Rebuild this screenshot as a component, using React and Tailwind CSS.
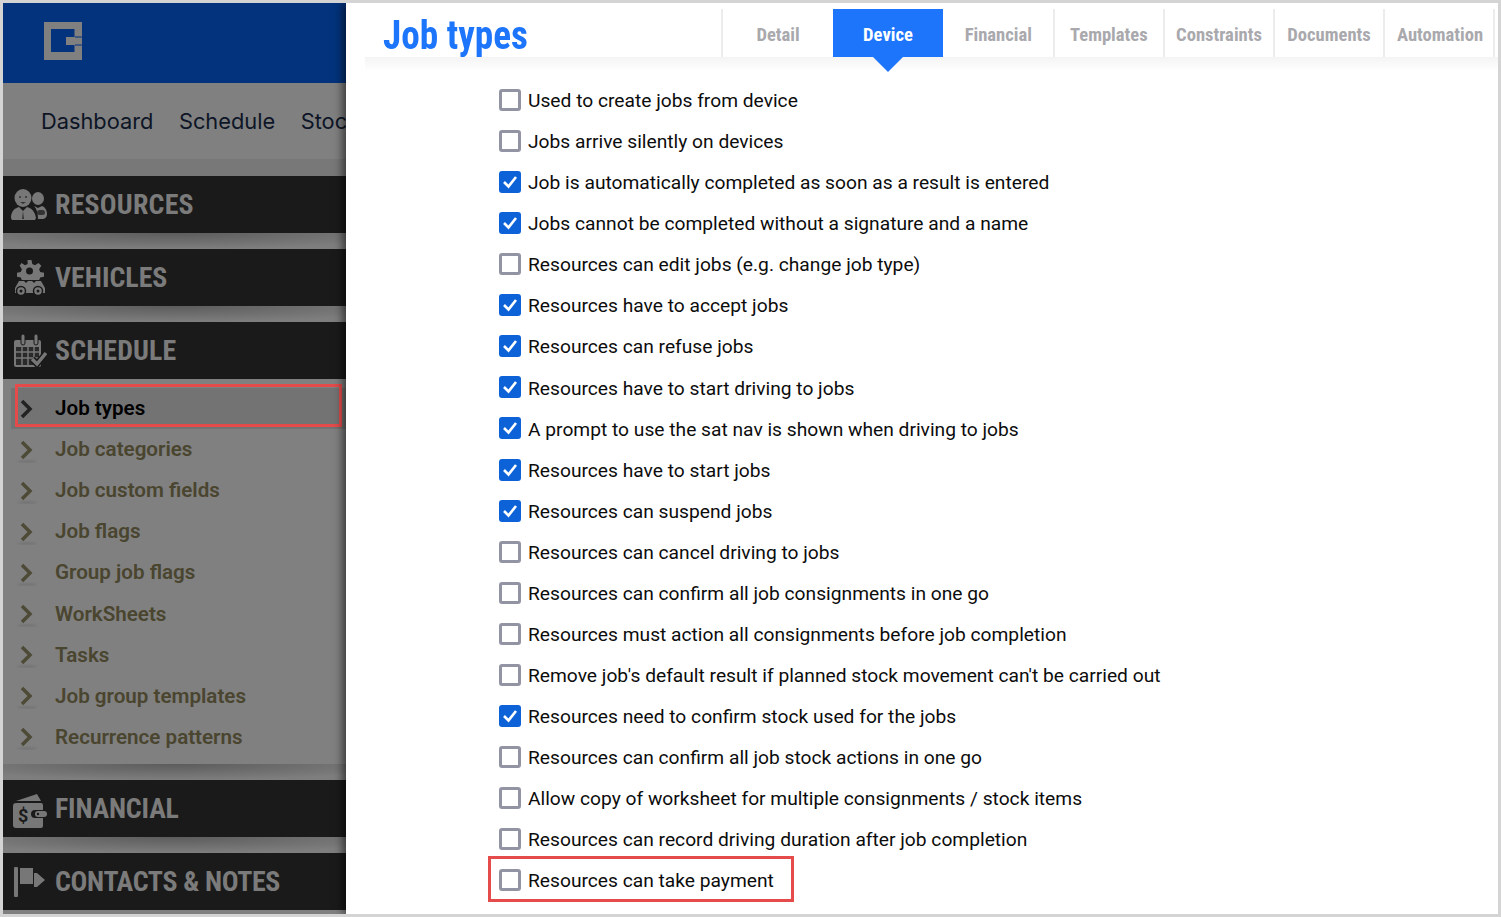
const rows = [
  ["Used to create jobs from device", false],
  ["Jobs arrive silently on devices", false],
  ["Job is automatically completed as soon as a result is entered", true],
  ["Jobs cannot be completed without a signature and a name", true],
  ["Resources can edit jobs (e.g. change job type)", false],
  ["Resources have to accept jobs", true],
  ["Resources can refuse jobs", true],
  ["Resources have to start driving to jobs", true],
  ["A prompt to use the sat nav is shown when driving to jobs", true],
  ["Resources have to start jobs", true],
  ["Resources can suspend jobs", true],
  ["Resources can cancel driving to jobs", false],
  ["Resources can confirm all job consignments in one go", false],
  ["Resources must action all consignments before job completion", false],
  ["Remove job's default result if planned stock movement can't be carried out", false],
  ["Resources need to confirm stock used for the jobs", true],
  ["Resources can confirm all job stock actions in one go", false],
  ["Allow copy of worksheet for multiple consignments / stock items", false],
  ["Resources can record driving duration after job completion", false],
];

const subItems = ["Job categories", "Job custom fields", "Job flags", "Group job flags", "WorkSheets", "Tasks", "Job group templates", "Recurrence patterns"];

const tabs = [
  { label: "Detail", cls: "w-[112px] border-l-2 border-l-[#ececec] text-[#a9a9ad]" },
  { label: "Device", cls: "w-[110px] bg-[#1c75fb] text-white" },
  { label: "Financial", cls: "w-[109.6px] pl-[1px] text-[#a9a9ad]" },
  { label: "Templates", cls: "w-[110.4px] border-l-2 border-l-[#ececec] text-[#a9a9ad]" },
  { label: "Constraints", cls: "w-[110px] border-l-2 border-l-[#ececec] text-[#a9a9ad]" },
  { label: "Documents", cls: "w-[110px] border-l-2 border-l-[#ececec] text-[#a9a9ad]" },
  { label: "Automation", cls: "w-[112px] pl-[2px] border-x-2 border-x-[#ececec] text-[#a9a9ad]" },
];

const condensed = "font-['Roboto_Condensed','Liberation_Sans_Narrow','Roboto',sans-serif] font-bold";

function PeopleIcon() {
  return (
    <svg width="38" height="32" viewBox="0 0 38 32" fill="#777">
      <ellipse cx="12" cy="9" rx="8.5" ry="9" />
      <path d="M0 29c0-7 4-10 8-11l4 4 4-4c4 1 8 4 9 11l-1 2H1z" />
      <ellipse cx="27" cy="9.5" rx="6" ry="6.5" />
      <path d="M23 17l4 2 4-2c3 1 5 4 5 8 0 3-2 5-5 5h-4c0-5-1-10-4-13z" />
      <circle cx="9" cy="8" r="1" fill="#333" />
      <circle cx="15" cy="8" r="1" fill="#333" />
      <path d="M9 13h6l-3 2z" fill="#333" />
      <path d="M12 22l-1 8h2z" fill="#333" />
      <rect x="26" y="21" width="8" height="5" rx="2.5" fill="#333" />
    </svg>
  );
}

function GearCarIcon() {
  return (
    <svg width="30" height="36" viewBox="0 0 30 36" fill="#777">
      <path d="M12.5 0h4l.8 4 2.7 1.2L23.5 3l2.8 2.8-2.2 3.4 1.1 2.8 3.8.8v4l-3.8.8-1 2.4H6.8l-1-2.4-3.8-.8v-4l3.8-.8 1.1-2.8-2.2-3.4L6.5 3 10 5.2 12.7 4z" />
      <circle cx="14.5" cy="11" r="3.5" fill="#1a1a1a" />
      <path d="M4 21h5l2 2 2-2h4l2 2 2-2h5l4 7v5H0v-5z" />
      <circle cx="6" cy="31" r="4.5" fill="#777" stroke="#1a1a1a" strokeWidth="1.5" />
      <circle cx="23" cy="31" r="4.5" fill="#777" stroke="#1a1a1a" strokeWidth="1.5" />
      <circle cx="6" cy="31" r="1.5" fill="#1a1a1a" />
      <circle cx="23" cy="31" r="1.5" fill="#1a1a1a" />
    </svg>
  );
}

function CalendarIcon() {
  return (
    <svg width="33" height="33" viewBox="0 0 33 33" fill="none">
      <path d="M2 6h23a2 2 0 0 1 2 2v23a2 2 0 0 1-2 2H2a2 2 0 0 1-2-2V8a2 2 0 0 1 2-2z" fill="#777" />
      <rect x="2" y="13" width="23" height="18" fill="#2a2a2a" />
      <path d="M2 18h23M2 24h23M8 13v18M14 13v18M20 13v18" stroke="#777" strokeWidth="1.5" />
      <rect x="7" y="0" width="4" height="11" rx="2" fill="#777" stroke="#1a1a1a" />
      <rect x="20" y="0" width="4" height="11" rx="2" fill="#777" stroke="#1a1a1a" />
      <path d="M18 25l5 5 9-11" stroke="#1a1a1a" strokeWidth="6.5" />
      <path d="M18 25l5 5 9-11" stroke="#777" strokeWidth="3.5" />
    </svg>
  );
}

function WalletIcon() {
  return (
    <svg width="34" height="34" viewBox="0 0 34 34" fill="#777" className="translate-y-[2px]">
      <path d="M3 7L24 0l4 7z" />
      <path d="M3 9h25a2 2 0 0 1 2 2v5H22a4 4 0 0 0 0 8h8v8a2 2 0 0 1-2 2H3a3 3 0 0 1-3-3V12a3 3 0 0 1 3-3z" />
      <rect x="22" y="17" width="12" height="6" rx="3" />
      <circle cx="25" cy="20" r="1.2" fill="#1a1a1a" />
      <text x="5" y="28" fontSize="18" fontWeight="700" fontFamily="Roboto, sans-serif" fill="#1a1a1a">$</text>
    </svg>
  );
}

function FlagIcon() {
  return (
    <svg width="32" height="30" viewBox="0 0 32 30" fill="#777">
      <rect x="0" y="0" width="4" height="30" rx="1" />
      <path d="M6 1h13v16H6z" />
      <path d="M20 6h3l8 7-8 7h-3z" />
    </svg>
  );
}

function GroupHeader({ icon, label, tracking = "" }) {
  return (
    <div className="h-[57px] shrink-0 bg-[#1a1a1a] flex items-center">
      <div className="w-[52px] shrink-0 flex justify-center pl-[2px]">{icon}</div>
      <span className={`${condensed} ${tracking} text-[27.9px] text-[#7b7b7b] leading-none`}>{label}</span>
    </div>
  );
}

function GapStrip() {
  return <div className="h-[16px] shrink-0 bg-[radial-gradient(ellipse_70%_100%_at_50%_0%,#5c5c5c,#7e7e7e)]" />;
}

function Chevron({ active }) {
  return (
    <svg width="24" height="26" viewBox="0 0 24 26" fill="none" stroke={active ? "#222" : "#4d4a36"} strokeWidth="3.5">
      <path d="M7 5l8 8-8 8" />
      {!active && <ellipse cx="12" cy="24.5" rx="10" ry="0.8" fill="#6a6a6a" stroke="none" className="blur-[1px]" />}
    </svg>
  );
}

function SubItem({ label, active }) {
  return (
    <div className={`h-[41.1px] ml-[8px] flex items-center pl-[4px] ${active ? "bg-[#737373]" : ""}`}>
      <Chevron active={active} />
      <span className={`ml-[16px] font-['Roboto',sans-serif] font-semibold text-[20.6px] ${active ? "text-black" : "text-[#4a452f]"}`}>{label}</span>
    </div>
  );
}

function Checkbox({ checked }) {
  if (checked) {
    return (
      <span className="w-[22px] h-[22px] rounded-[3px] bg-[#0d62d8] flex items-center justify-center shrink-0">
        <svg width="16" height="14" viewBox="0 0 16 14" fill="none" stroke="#fff" strokeWidth="2.6">
          <path d="M2 7l4.5 4.5L14 2" />
        </svg>
      </span>
    );
  }
  return <span className="w-[22px] h-[22px] rounded-[3px] border-[3px] border-[#9394a3] bg-white shrink-0" />;
}

function Row({ label, checked }) {
  return (
    <div className="h-[41.06px] flex items-center gap-[7px]">
      <Checkbox checked={checked} />
      <span className="pt-[3px] font-['Roboto',sans-serif] text-[19.22px] text-[#0c0c0c] whitespace-nowrap">{label}</span>
    </div>
  );
}

export default function App() {
  return (
    <div className="w-[1501px] h-[917px] border-[3px] border-[#d4d4d4] bg-white flex overflow-hidden">
      <aside className="w-[343px] shrink-0 bg-[#808080] flex flex-col">
        <div className="h-[80px] shrink-0 bg-[#03337c] flex items-center pl-[41px] pb-[4px]">
          <svg width="38" height="38" viewBox="0 0 38 38">
            <path d="M0 0h38v38H0zM7 7v23h23.5V7z" fill="#808080" fillRule="evenodd" />
            <rect x="22" y="15" width="16" height="8" fill="#808080" />
            <rect x="31" y="14.5" width="7" height="1" fill="#03337c" />
            <rect x="31" y="22.5" width="7" height="1" fill="#03337c" />
          </svg>
        </div>
        <nav className="h-[76px] shrink-0 flex items-center gap-[25.5px] pl-[38px] font-['Inter',sans-serif] text-[21.8px] text-[#0d1526] whitespace-nowrap overflow-hidden">
          <span>Dashboard</span>
          <span>Schedule</span>
          <span>Stock</span>
        </nav>
        <div className="h-[17px] shrink-0 bg-[#787878]" />
        <GroupHeader icon={<PeopleIcon />} label="RESOURCES" tracking="tracking-[0.2px]" />
        <GapStrip />
        <GroupHeader icon={<GearCarIcon />} label="VEHICLES" />
        <GapStrip />
        <GroupHeader icon={<CalendarIcon />} label="SCHEDULE" tracking="tracking-[0.1px]" />
        <div className="h-[385px] shrink-0 pt-[9px]">
          <div className="relative">
            <SubItem label="Job types" active />
            <div className="absolute left-[12px] top-[-4px] w-[327px] h-[43px] border-[3px] border-[#e54b4b]" />
          </div>
          {subItems.map((s) => <SubItem key={s} label={s} />)}
        </div>
        <GapStrip />
        <GroupHeader icon={<WalletIcon />} label="FINANCIAL" tracking="tracking-[-0.2px]" />
        <GapStrip />
        <GroupHeader icon={<FlagIcon />} label="CONTACTS & NOTES" tracking="tracking-[-0.33px]" />
      </aside>

      <main className="flex-1 min-w-0 flex flex-col shadow-[-3px_0_9px_rgba(0,0,0,0.6)] z-10 bg-white pl-[19px]">
        <div className="shrink-0 pt-[6px]">
          <div className="h-[48px] flex items-stretch shadow-[0_1px_1px_rgba(0,0,0,0.06)]">
            <div className="w-[356px] pl-[18px]">
              <h1 className={`${condensed} inline-block origin-left scale-x-[0.93] text-[40px] text-[#1c75fb] leading-[54px]`}>Job types</h1>
            </div>
            {tabs.map((t) => (
              <div key={t.label} className={`relative flex items-center justify-center pt-[5px] ${condensed} text-[18.6px] ${t.cls}`}>
                {t.label}
                {t.label === "Device" && (
                  <span className="absolute top-full left-1/2 -translate-x-1/2 border-x-[15.5px] border-x-transparent border-t-[15.5px] border-t-[#1c75fb]" />
                )}
              </div>
            ))}
          </div>
          <div className="h-[14px] bg-gradient-to-b from-[#f4f4f4] to-white" />
        </div>
        <div className="pl-[134px] pt-[8.6px]">
          {rows.map(([label, checked]) => <Row key={label} label={label} checked={checked} />)}
          <div className="relative">
            <Row label="Resources can take payment" checked={false} />
            <div className="absolute left-[-11px] top-[-3px] w-[306px] h-[46px] border-[3px] border-[#e54b4b]" />
          </div>
        </div>
      </main>
    </div>
  );
}
